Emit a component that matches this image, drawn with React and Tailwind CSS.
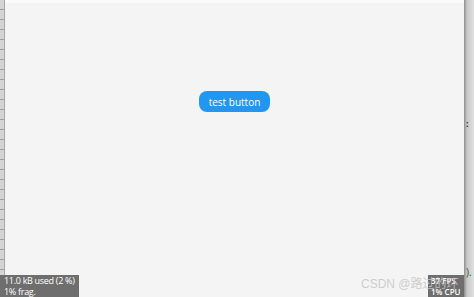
const App = () => {
  return (
    <div className="w-[474px] h-[297px] flex bg-[#f4f4f4] overflow-hidden font-['Open_Sans','Liberation_Sans',sans-serif]">
      {/* left editor gutter */}
      <div className="w-[5px] h-full border-r border-[#a8a8a8] bg-[repeating-linear-gradient(to_bottom,#d4d4d4_0px,#d4d4d4_9px,#a0a0a0_9px,#a0a0a0_10px)]" />

      {/* main canvas */}
      <div className="relative flex-1 h-full flex flex-col">
        <div className="h-[3px] bg-[#fafafa]" />
        <div className="flex-1 flex justify-center pt-[88px]">
          <button className="h-[21px] w-[71px] rounded-lg bg-[#2196f3] text-white text-[10px] leading-none">
            test button
          </button>
        </div>

        {/* bottom overlays */}
        <div className="absolute left-[-5px] bottom-0 w-[79px] h-[22px] bg-[#6e6e6e] text-white text-[9px] leading-[11px] tracking-[-0.3px] pl-[4px] whitespace-nowrap">
          <div>11.0 kB used (2 %)</div>
          <div>1% frag.</div>
        </div>
        <div className="absolute right-0 bottom-0 w-[36px] h-[22px] bg-[#6e6e6e] text-white text-[8px] leading-[11px] font-semibold pl-[3px] whitespace-nowrap">
          <div>37 FPS</div>
          <div>1% CPU</div>
        </div>
        <div className="absolute left-[356px] bottom-[7px] z-10 text-[12px] leading-none text-[#c8c8c8]/90 whitespace-nowrap font-['Liberation_Sans','Noto_Sans_CJK_SC',sans-serif]">
          CSDN @路过的环
        </div>
      </div>

      {/* right scroll edge */}
      <div className="w-[10px] h-full flex flex-col bg-[linear-gradient(to_right,#8c8c8c,#c8c8c8_30%,#e0e0e0)]">
        <div className="h-[120px]" />
        <div className="h-[14px] text-[9px] leading-[7px] text-[#333] font-bold pl-[2px]">:</div>
        <div className="flex-1" />
        <div className="h-[32px] text-[10px] text-[#2d5a2d] pl-[2px]">).</div>
      </div>
    </div>
  );
};

export default App;
